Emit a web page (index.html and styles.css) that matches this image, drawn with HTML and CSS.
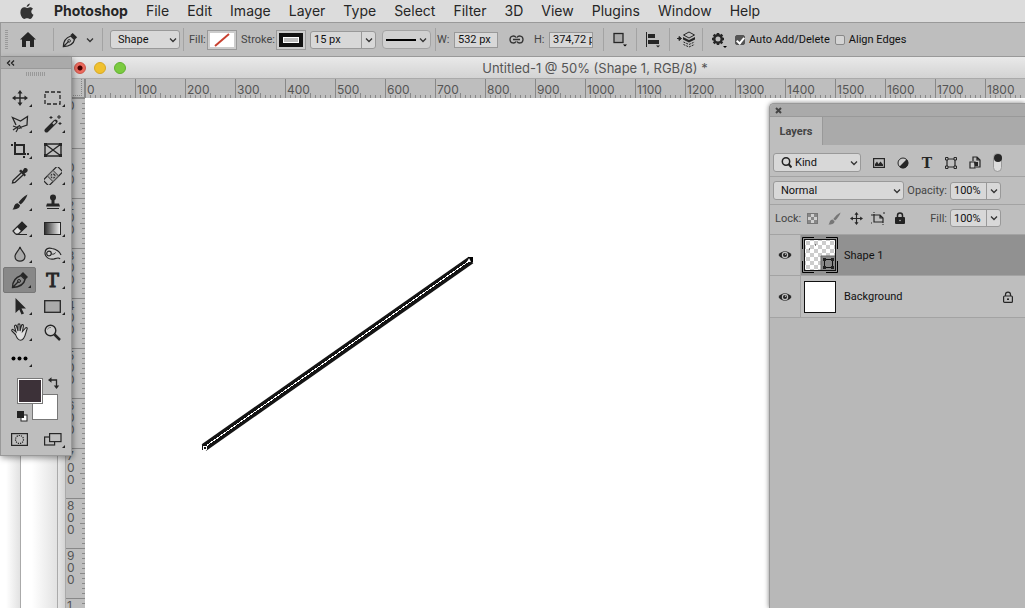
FILE: index.html
```html
<!DOCTYPE html>
<html lang="en">
<head>
  <meta charset="UTF-8" />
  <meta name="viewport" content="width=device-width, initial-scale=1.0"/>
  <title>Photoshop - Untitled-1</title>
  <link rel="stylesheet" href="styles.css">
</head>
<body>
  <!-- shared icons -->
  <svg class="defs" width="0" height="0">
    <symbol id="chevron" viewBox="0 0 8 6"><path d="M1 1.5 L4 4.5 L7 1.5" fill="none" stroke="#333" stroke-width="1.3"/></symbol>
    <symbol id="pen" viewBox="0 0 18 18">
      <path d="M1.5 16.5 C1.5 11 4 6.500 10 4.500 L14 8.500 C13 13.500 8 16 1.5 16.500Z M2 16 L7.500 10.500" fill="none" stroke="#262626" stroke-width="1.4"/>
      <circle cx="8" cy="10" r="1.500" fill="none" stroke="#262626"/>
      <path d="M9.500 3.500 L12 1 L17 6 L14.500 8.500Z" fill="#262626"/>
    </symbol>
    <symbol id="eye" viewBox="0 0 14 10">
      <path d="M0.500 5 C3.500 0 10.500 0 13.500 5 C10.500 10 3.500 10 0.500 5Z" fill="#262626"/>
      <circle cx="7" cy="5" r="3.200" fill="#bebebe"/><circle cx="7" cy="5" r="2" fill="#262626"/><circle cx="7.500" cy="4.300" r=".7" fill="#bebebe"/>
    </symbol>
    <symbol id="move" viewBox="0 0 16 16">
      <path d="M8 2V14M2 8H14" stroke="#262626" stroke-width="1.4"/>
      <path d="M8 0L10.500 3.500H5.500ZM8 16L5.500 12.500H10.500ZM0 8L3.500 5.500V10.500ZM16 8L12.500 10.500V5.500Z" fill="#262626"/>
    </symbol>
    <symbol id="brush" viewBox="0 0 16 16">
      <path d="M15.500 .5 C12 2 8.500 5.500 6.500 8.500 L8.700 10.500 C11.500 8 14.500 4 15.500 .5Z M5.800 9.300 L8 11.300 C8 14.500 4 15.500 .5 15.500 C2.500 14 1.500 9.500 5.800 9.300Z" fill="currentColor"/>
    </symbol>
    <symbol id="shape" viewBox="0 0 12 12">
      <path d="M2 2H10V10H2Z" fill="none" stroke="#262626" stroke-width="1.200"/>
      <path d="M.5 .5h2.500v2.500h-2.500zM9 .5h2.500v2.500h-2.500zM.5 9h2.500v2.500h-2.500zM9 9h2.500v2.500h-2.500z" fill="#bebebe" stroke="#262626"/>
    </symbol>
  </svg>

  <nav class="menubar">
    <a href="#" class="apple" aria-label="Apple menu"><svg width="14" height="17" viewBox="0 0 14 17"><path d="M9.800 0.500C9.900 2.300 8.300 4 6.700 3.900C6.600 2.200 8.100 .7 9.800 .5Z M7 5C7.800 5 8.600 4.200 10 4.200C11.300 4.200 12.400 4.900 13 5.800C10.500 7.300 10.900 10.600 13.500 11.700C12.700 13.900 11.400 16 9.900 16C8.800 16 8.400 15.300 7.100 15.300C5.700 15.300 5.300 16 4.300 16C2.400 16 .4 12.500 .4 9.300C.4 6 2.400 4.300 4.300 4.300C5.500 4.300 6.300 5 7 5Z" fill="#333"/></svg></a>
    <a href="#" class="app-name">Photoshop</a>
    <a href="#">File</a>
    <a href="#">Edit</a>
    <a href="#">Image</a>
    <a href="#">Layer</a>
    <a href="#">Type</a>
    <a href="#">Select</a>
    <a href="#">Filter</a>
    <a href="#">3D</a>
    <a href="#">View</a>
    <a href="#">Plugins</a>
    <a href="#">Window</a>
    <a href="#">Help</a>
  </nav>

  <div class="options">
    <span class="grip-v"></span>
    <button class="opt home" aria-label="Home"><svg width="16" height="15" viewBox="0 0 16 15"><path d="M8 0L16 7.500H14V15H10V9H6V15H2V7.500H0Z" fill="#262626"/></svg></button>
    <button class="opt pen-preset" aria-label="Pen tool preset"><svg width="16" height="16"><use href="#pen"/></svg><svg width="8" height="6"><use href="#chevron"/></svg></button>
    <div class="opt mode">
      <span class="select w70">
        <select aria-label="Tool mode"><option>Shape</option><option>Path</option></select>
        <svg width="8" height="6"><use href="#chevron"/></svg>
      </span>
    </div>
    <div class="opt paint">
      <span class="lbl">Fill:</span>
      <button class="swatch none" aria-label="Fill"><svg width="24" height="14" viewBox="0 0 24 14"><path d="M5 13L19 1" stroke="#c8402f" stroke-width="2"/></svg></button>
      <span class="lbl stroke-lbl">Stroke:</span>
      <button class="swatch black" aria-label="Stroke"><i></i></button>
      <span class="combo w65"><input type="text" value="15 px" aria-label="Stroke width"><button aria-label="Stroke width options"><svg width="8" height="6"><use href="#chevron"/></svg></button></span>
      <button class="line-style" aria-label="Stroke type"><svg width="30" height="4"><path d="M0 2H30" stroke="#000" stroke-width="2"/></svg><svg width="8" height="6"><use href="#chevron"/></svg></button>
    </div>
    <div class="opt size">
      <label for="w">W:</label><input id="w" class="field" type="text" value="532 px">
      <button class="link" aria-label="Link width and height"><svg width="15" height="9" viewBox="0 0 15 9"><path d="M7 2.500C6 .5 1 0 1 4.500S6 8.500 7 6.500M8 2.500C9 .5 14 0 14 4.500S9 8.500 8 6.500M4 4.500H11" fill="none" stroke="#333" stroke-width="1.300"/></svg></button>
      <label for="h">H:</label><input id="h" class="field" type="text" value="374,72 px">
    </div>
    <button class="opt ico" aria-label="Path operations"><svg width="15" height="15" viewBox="0 0 15 15"><rect x="1" y="1.500" width="9" height="9" fill="#aaa" stroke="#262626" stroke-width="1.300"/><path d="M10 12.500h4l-2 2z" fill="#000"/></svg></button>
    <button class="opt ico" aria-label="Path alignment"><svg width="16" height="16" viewBox="0 0 16 16"><path d="M1.500 0V15" stroke="#262626"/><path d="M3 2h7v4h-7zM3 8h11v4h-11zM11 13.500h4l-2 2z" fill="#262626"/></svg></button>
    <button class="opt ico" aria-label="Path arrangement"><svg width="19" height="17" viewBox="0 0 19 17"><path d="M0 7.500h3M2 5.500v4l2.500-2z" fill="#262626" stroke="#262626"/><path d="M12 1L17.500 4L12 7L6.500 4Z" fill="#bebebe" stroke="#262626"/><path d="M6 6l6 3 6-3v2.500l-6 3-6-3z" fill="#262626"/><path d="M6.500 11L12 13.500L17.500 11M6.500 13.500L12 16L17.500 13.500" fill="none" stroke="#262626" stroke-dasharray="2 1"/></svg></button>
    <div class="opt last">
      <button class="gear" aria-label="Settings"><svg width="16" height="16" viewBox="0 0 16 16"><path d="M7 1V13M1 7H13M2.700 2.700L11.300 11.300M11.300 2.700L2.700 11.300" stroke="#262626" stroke-width="2.500"/><circle cx="7" cy="7" r="3.700" fill="#bebebe" stroke="#262626" stroke-width="2.400"/><path d="M12 14h4l-2 2z" fill="#000"/></svg></button>
      <label class="check"><input type="checkbox" checked>Auto Add/Delete</label>
      <label class="check"><input type="checkbox">Align Edges</label>
    </div>
  </div>

  <main class="workspace">
    <div class="sheet first"></div>
    <div class="sheet second"></div>
    <div class="sheet third"></div>

    <section class="document">
      <header class="titlebar">
        <span class="lights"><i class="red"></i><i class="yellow"></i><i class="green"></i></span>
        <span class="doc-title">Untitled-1 @ 50% (Shape 1, RGB/8) *</span>
      </header>
      <div class="ruler-corner"></div>
      <div class="ruler-h">
        <span>0</span><span>100</span><span>200</span><span>300</span><span>400</span><span>500</span><span>600</span><span>700</span><span>800</span><span>900</span><span>1000</span><span>1100</span><span>1200</span><span>1300</span><span>1400</span><span>1500</span><span>1600</span><span>1700</span><span>1800</span>
      </div>
      <div class="ruler-v">
        <span>0</span><span>100</span><span>200</span><span>300</span><span>400</span><span>500</span><span>600</span><span>700</span><span>800</span><span>900</span><span>1000</span>
      </div>
      <div class="canvas">
        <svg width="400" height="360" viewBox="0 0 400 360">
          <path d="M119 349.500L386 162" stroke="#151515" stroke-width="8"/>
          <path d="M121 348L384 163" stroke="#fff" stroke-width="1" shape-rendering="crispEdges"/>
          <rect x="117" y="347" width="5" height="5" fill="#111"/>
          <rect x="118.500" y="348.500" width="3" height="3" fill="none" stroke="#fff" shape-rendering="crispEdges"/>
          <rect x="383" y="159" width="5" height="5" fill="#000"/>
          <path d="M382 164L384 160L386 164Z" fill="#fff"/>
        </svg>
      </div>
    </section>

    <aside class="tools">
      <header><svg width="9" height="6" viewBox="0 0 9 6"><path d="M4 .5L1.500 3L4 5.500M8 .5L5.500 3L8 5.500" fill="none" stroke="#222" stroke-width="1.300"/></svg></header>
      <div class="grip-h"></div>
      <div class="tool-grid">
        <button class="more" aria-label="Move"><svg width="16" height="16"><use href="#move"/></svg></button>
        <button class="more" aria-label="Marquee"><svg width="18" height="14" viewBox="0 0 18 14"><rect x="1" y="1" width="15" height="12" fill="none" stroke="#262626" stroke-width="1.300" stroke-dasharray="4 2"/></svg></button>
        <button class="more" aria-label="Lasso"><svg width="18" height="18" viewBox="0 0 18 18"><path d="M5 10L1.500 2.500L9.500 6L16.500 1.500L16 10L9 12.500" fill="none" stroke="#262626" stroke-width="1.300"/><path d="M2 11L9 13.500M2 15L8.500 10.500L10 13L5.500 13M7 13.500L5 17" fill="none" stroke="#262626" stroke-width="1.200"/></svg></button>
        <button class="more" aria-label="Magic wand"><svg width="18" height="18" viewBox="0 0 18 18"><path d="M2.500 15.500L11.500 6.500" stroke="#262626" stroke-width="4" stroke-linecap="round"/><path d="M9 9L11.500 6.500" stroke="#bebebe" stroke-width="2"/><path d="M7 1v3M5.500 2.500h3M15 0v4M13 2h4M16 7v3M14.500 8.500h3" stroke="#262626"/></svg></button>
        <button class="more" aria-label="Crop"><svg width="18" height="18" viewBox="0 0 18 18"><path d="M0 4H2M5 4H13V14M13 15V17M4 1V13H15M16 13H18" fill="none" stroke="#262626" stroke-width="2"/></svg></button>
        <button aria-label="Frame"><svg width="18" height="14" viewBox="0 0 18 14"><path d="M1 1H17V13H1ZL17 13M17 1L1 13" fill="none" stroke="#262626" stroke-width="1.400"/><path d="M0 0h3v3h-3zM15 0h3v3h-3zM0 11h3v3h-3zM15 11h3v3h-3z" fill="#262626"/></svg></button>
        <button class="more" aria-label="Eyedropper"><svg width="18" height="18" viewBox="0 0 18 18"><path d="M10 6L2 13.500L1.500 16L4 15.500L12 8" fill="none" stroke="#262626" stroke-width="1.300"/><path d="M8 4L10 2.500L11.500 4L13 1.500C15.500 0 18 3 16 5L13.500 6.500L15 8L13.500 9.500Z" fill="#262626"/></svg></button>
        <button class="more" aria-label="Healing brush"><svg width="18" height="18" viewBox="0 0 18 18"><g transform="rotate(-45 9 9)" fill="none" stroke="#262626"><rect x="-1" y="5" width="20" height="8" rx="1" stroke-width="1.200"/><rect x="5" y="5" width="8" height="8" fill="#aaa" stroke="#555"/><circle cx="9" cy="9" r="2" stroke-dasharray="1.500 1"/></g></svg></button>
        <button class="more" aria-label="Brush"><svg width="16" height="16"><use href="#brush"/></svg></button>
        <button class="more" aria-label="Clone stamp"><svg width="16" height="16" viewBox="0 0 16 16"><circle cx="8" cy="3.500" r="3" fill="#262626"/><path d="M6.500 5h3v4.500h4.500l1 3H1l1-3h4.500z" fill="#262626"/><path d="M2 14.500H14" stroke="#262626"/></svg></button>
        <button class="more" aria-label="Eraser"><svg width="18" height="16" viewBox="0 0 18 16"><path d="M2 11L11 2L15.500 6.500L7.500 14H4.500Z" fill="#ddd" stroke="#262626" stroke-width="1.200"/><path d="M6 7L11 2L15.500 6.500L10.500 11.500Z" fill="#262626"/><path d="M5 14.500H16" stroke="#262626"/></svg></button>
        <button class="more" aria-label="Gradient"><span class="gradient-ico"></span></button>
        <button class="more" aria-label="Blur"><svg width="14" height="16" viewBox="0 0 14 16"><path d="M7 .8C8 5 12 7 12 10.500C12 13.500 9.500 15.200 7 15.200S2 13.500 2 10.500C2 7 6 5 7 .8Z" fill="#aaa" stroke="#262626" stroke-width="1.200"/></svg></button>
        <button class="more" aria-label="Dodge"><svg width="18" height="16" viewBox="0 0 18 16"><path d="M16 13C15 11 13 12 10 13C5 14 1 11 1 7C1 3 4 1.500 8 2.500C12 3 16 6 17 9" fill="#ccc" stroke="#262626" stroke-width="1.200"/><circle cx="5" cy="7.500" r="2.300" fill="none" stroke="#262626" stroke-width="1.200"/><path d="M7.500 8C9 8.500 11 8 11.500 6.500" fill="none" stroke="#262626"/></svg></button>
        <button class="more active" aria-label="Pen"><svg width="18" height="18"><use href="#pen"/></svg></button>
        <button class="more type-ico" aria-label="Type">T</button>
        <button class="more" aria-label="Path selection"><svg width="12" height="18" viewBox="0 0 12 18"><path d="M1.500 1L12 11.500H7.500L10 16.500L7.500 17.500L5.300 12.500L1.500 16Z" fill="#262626"/></svg></button>
        <button class="more" aria-label="Rectangle"><svg width="17" height="13" viewBox="0 0 17 13"><rect x=".7" y=".7" width="15.600" height="11.600" fill="#aaa" stroke="#262626" stroke-width="1.300"/></svg></button>
        <button class="more" aria-label="Hand"><svg width="20" height="18" viewBox="0 0 20 18"><path d="M5.500 11.500L2 8C1 7 2.500 5.800 3.500 6.800L6 9L4.500 3.500C4.200 2 6 1.700 6.500 3L8 8V2C8 .5 10 .5 10 2V8L11.500 2.500C12 1 13.700 1.500 13.400 3L12.500 8.500L15.500 5C16.500 4 17.800 5 17 6.200C15.500 9 15.500 17.200 10.500 17.200C7.500 17.200 6.500 14 5.500 11.500Z" fill="#ddd" stroke="#262626" stroke-width="1.100"/></svg></button>
        <button aria-label="Zoom"><svg width="17" height="17" viewBox="0 0 17 17"><circle cx="6.500" cy="6.500" r="5.300" fill="#ccc" stroke="#262626" stroke-width="1.400"/><path d="M3.500 5.500C4 4 5.500 3.300 7 3.500" fill="none" stroke="#777"/><path d="M10.500 10.500L16 16" stroke="#262626" stroke-width="2.500"/></svg></button>
        <button class="more" aria-label="Edit toolbar"><svg width="17" height="5" viewBox="0 0 17 5"><circle cx="2.500" cy="2.500" r="2"/><circle cx="8.500" cy="2.500" r="2"/><circle cx="14.500" cy="2.500" r="2"/></svg></button>
      </div>
      <div class="colors">
        <button class="bg-color" aria-label="Background color"></button>
        <button class="fg-color" aria-label="Foreground color"></button>
        <button class="swap" aria-label="Swap colors"><svg width="12" height="12" viewBox="0 0 12 12"><path d="M2 3H8.500V9" fill="none" stroke="#262626" stroke-width="1.300"/><path d="M0 3L3.500 .3V5.700ZM8.500 12L5.800 8.500H11.200Z" fill="#262626"/></svg></button>
        <button class="default" aria-label="Default colors"><svg width="11" height="11" viewBox="0 0 11 11"><rect x="4" y="4" width="6" height="6" fill="#fff" stroke="#262626"/><rect width="7" height="7" fill="#222"/></svg></button>
      </div>
      <div class="tool-grid modes">
        <button aria-label="Quick mask"><svg width="17" height="13" viewBox="0 0 17 13"><rect x=".6" y=".6" width="15.800" height="11.800" fill="none" stroke="#262626" stroke-width="1.200"/><circle cx="8.500" cy="6.500" r="4" fill="none" stroke="#262626" stroke-width="1.200" stroke-dasharray="1.200 1"/></svg></button>
        <button class="more" aria-label="Screen mode"><svg width="18" height="13" viewBox="0 0 18 13"><rect x=".6" y="4" width="10" height="8" fill="none" stroke="#262626" stroke-width="1.200"/><rect x="5.600" y=".6" width="11.400" height="8" fill="#bebebe" stroke="#262626" stroke-width="1.200"/></svg></button>
      </div>
    </aside>

    <aside class="layers">
      <header><svg width="7" height="7" viewBox="0 0 7 7"><path d="M1 1L6 6M6 1L1 6" stroke="#444" stroke-width="2"/></svg></header>
      <div class="tabs"><button>Layers</button></div>

      <div class="panel-row filter">
        <span class="select w88 search">
          <svg class="lens" width="11" height="11" viewBox="0 0 11 11"><circle cx="5" cy="4.500" r="3.700" fill="none" stroke="#222" stroke-width="1.500"/><path d="M7.500 7L10.500 10.500" stroke="#222" stroke-width="2"/></svg>
          <select aria-label="Filter kind"><option>Kind</option></select>
          <svg width="8" height="6"><use href="#chevron"/></svg>
        </span>
        <div class="filter-icons">
          <button aria-label="Pixel layers"><svg width="12" height="10" viewBox="0 0 12 10"><rect x=".6" y=".6" width="10.800" height="8.800" fill="none" stroke="#262626" stroke-width="1.200"/><path d="M2 8V6L4 3.500L5.500 6L7.500 3.500L10 6.500V8Z" fill="#262626"/></svg></button>
          <button aria-label="Adjustment layers"><svg width="12" height="12" viewBox="0 0 12 12"><circle cx="6" cy="6" r="5" fill="#ccc" stroke="#262626"/><path d="M9.700 2.300A5.200 5.200 0 1 1 2.300 9.700Z" fill="#262626"/></svg></button>
          <button class="t" aria-label="Type layers">T</button>
          <button aria-label="Shape layers"><svg width="12" height="12"><use href="#shape"/></svg></button>
          <button aria-label="Smart objects"><svg width="12" height="13" viewBox="0 0 12 13"><path d="M4 5V1H8L11 4V11H7M8 1V4H11" fill="none" stroke="#262626" stroke-width="1.200"/><path d="M1 6H6V12H1Z" fill="#ccc" stroke="#262626" stroke-width="1.200"/><path d="M5 6h4v4h-3z" fill="#262626"/></svg></button>
          <button class="toggle" aria-label="Toggle filter"><i></i></button>
        </div>
      </div>

      <div class="panel-row blend">
        <span class="select w131">
          <select aria-label="Blend mode"><option>Normal</option><option>Multiply</option></select>
          <svg width="8" height="6"><use href="#chevron"/></svg>
        </span>
        <label class="amount" for="opacity">Opacity:</label>
        <span class="combo w51"><input id="opacity" type="text" value="100%"><button aria-label="Opacity slider"><svg width="8" height="6"><use href="#chevron"/></svg></button></span>
      </div>

      <div class="panel-row lock">
        <span class="lock-lbl">Lock:</span>
        <div class="lock-icons">
          <button aria-label="Lock transparency"><svg width="11" height="11" viewBox="0 0 11 11"><rect x=".5" y=".5" width="10" height="10" fill="#d0d0d0" stroke="#777"/><path d="M1 1h3v3h-3zM7 1h3v3h-3zM4 4h3v3h-3zM1 7h3v3h-3zM7 7h3v3h-3z" fill="#888"/></svg></button>
          <button class="dim" aria-label="Lock pixels"><svg width="13" height="13"><use href="#brush"/></svg></button>
          <button aria-label="Lock position"><svg width="13" height="13"><use href="#move"/></svg></button>
          <button aria-label="Lock artboard"><svg width="14" height="13" viewBox="0 0 14 13"><path d="M0 3H9L12 6V11M3 2V10H12M9 3V6H12" fill="none" stroke="#262626" stroke-width="1.200"/><path d="M3 0v1M12 1h2M0 11h1M12 12v1" stroke="#262626"/></svg></button>
          <button aria-label="Lock all"><svg width="10" height="12" viewBox="0 0 10 12"><path d="M2.500 6V3.500C2.500 .3 7.500 .3 7.500 3.500V6" fill="none" stroke="#222" stroke-width="1.500"/><rect y="5" width="10" height="7" rx="1" fill="#222"/><circle cx="5" cy="8.500" r=".8" fill="#bbb"/></svg></button>
        </div>
        <label class="amount" for="fill">Fill:</label>
        <span class="combo w51"><input id="fill" type="text" value="100%"><button aria-label="Fill slider"><svg width="8" height="6"><use href="#chevron"/></svg></button></span>
      </div>

      <div class="layer selected">
        <button class="eye" aria-label="Toggle visibility"><svg width="14" height="10"><use href="#eye"/></svg></button>
        <svg class="thumb" width="36" height="36" viewBox="0 0 36 36">
          <defs><pattern id="checker" width="8" height="8" patternUnits="userSpaceOnUse"><rect width="8" height="8" fill="#fff"/><path d="M0 0h4v4h-4zM4 4h4v4h-4z" fill="#ccc"/></pattern></defs>
          <rect x="2.500" y="2.500" width="31" height="31" fill="url(#checker)" stroke="#111"/>
          <path d="M7 12h1M13 8h1" stroke="#111"/>
          <rect x="19" y="19" width="14" height="14" fill="#888"/>
          <path d="M19 33V19H33" fill="none" stroke="#666"/>
          <path d="M22.500 22.500h8v8h-8z" fill="none" stroke="#111"/>
          <path d="M21 21h3v3h-3zM29 21h3v3h-3zM21 29h3v3h-3zM29 29h3v3h-3z" fill="#222"/>
          <path d="M.5 12V.5H12M24 .5H35.500V12M35.500 24V35.500H24M12 35.500H.5V24" fill="none" stroke="#000"/>
        </svg>
        <span class="name">Shape 1</span>
      </div>
      <div class="layer">
        <button class="eye" aria-label="Toggle visibility"><svg width="14" height="10"><use href="#eye"/></svg></button>
        <svg class="thumb" width="36" height="36" viewBox="0 0 36 36"><rect x="2.500" y="2.500" width="31" height="31" fill="#fff" stroke="#111"/></svg>
        <span class="name">Background</span>
        <svg class="locked" width="10" height="12" viewBox="0 0 10 12"><path d="M2.500 5V3.500C2.500 .3 7.500 .3 7.500 3.500V5" fill="none" stroke="#262626" stroke-width="1.200"/><rect x=".6" y="5" width="8.800" height="6.400" rx="1" fill="none" stroke="#262626" stroke-width="1.200"/><circle cx="5" cy="8.200" r=".9"/></svg>
      </div>
    </aside>
  </main>
</body>
</html>
```
FILE: styles.css
```css
* {
  box-sizing: border-box;
}

body {
  margin: 0;
  height: 100vh;
  display: flex;
  flex-direction: column;
  overflow: hidden;
  font-family: Roboto, "Liberation Sans", sans-serif;
  font-size: 11px;
  color: #111;
}

button {
  display: flex;
  align-items: center;
  justify-content: center;
  padding: 0;
  border: none;
  background: none;
  font: inherit;
  color: #262626;
}

input,
select {
  font: inherit;
  color: #111;
}

svg {
  flex: none;
}

.defs {
  position: absolute;
}

/* menu bar */
.menubar {
  flex: none;
  display: flex;
  align-items: center;
  gap: 18px;
  height: 23px;
  padding-left: 20px;
  background: #dcdcdc;
  border-bottom: 1px solid #999;
  font-family: Inter, "Liberation Sans", sans-serif;
  font-size: 14px;
  line-height: 22px;
}

.menubar a {
  color: #262626;
  text-decoration: none;
  white-space: nowrap;
}

.apple {
  display: flex;
  width: 16px;
}

.menubar .app-name {
  font-weight: 700;
}

/* options bar */
.options {
  flex: none;
  display: flex;
  align-items: center;
  height: 34px;
  background: #bebebe;
  border-left: 1px solid #999;
  border-bottom: 1px solid #999;
  white-space: nowrap;
}

.grip-v {
  width: 3px;
  height: 20px;
  margin-left: 4px;
  background: repeating-linear-gradient(#999 0 1px, transparent 1px 2px);
}

.opt {
  display: flex;
  align-items: center;
  height: 23px;
  border-right: 1px solid #a3a3a3;
}

.home {
  width: 46px;
  justify-content: flex-start;
  padding-left: 12px;
}

.pen-preset {
  width: 49px;
  gap: 8px;
}

.mode {
  width: 81px;
  padding-left: 7px;
}

.paint {
  width: 252px;
  padding-left: 5px;
}

.size {
  width: 168px;
  padding-left: 1px;
}

.ico {
  width: 33px;
}

.last {
  border: none;
  padding-left: 8px;
}

.lbl,
.options label,
.amount,
.lock-lbl {
  color: #444;
}

.lbl {
  width: 18px;
}

.stroke-lbl {
  width: 35px;
  margin-left: 4px;
}

.select {
  position: relative;
  display: flex;
  height: 19px;
}

.select select {
  appearance: none;
  width: 100%;
  padding: 0 7px;
  background: #d8d8d8;
  border: 1px solid #999;
  border-radius: 3px;
}

.select svg {
  position: absolute;
  right: 3px;
  top: 7px;
  pointer-events: none;
}

.select .lens {
  left: 8px;
  top: 4px;
}

.search select {
  padding-left: 21px;
}

.w51 {
  width: 51px;
}

.w65 {
  width: 66px;
}

.w70 {
  width: 70px;
}

.w88 {
  width: 88px;
}

.w131 {
  width: 131px;
}

.swatch {
  width: 30px;
  height: 20px;
  border: 1px solid #999;
  background: #ccc;
}

.swatch.none svg {
  background: #fff;
}

.swatch.black {
  margin-right: 4px;
}

.swatch i {
  width: 16px;
  height: 6px;
  background: #bebebe;
  border: 1px solid #fff;
  box-shadow: 0 0 0 4px #111;
}

.combo {
  display: flex;
  height: 18px;
  background: #d8d8d8;
  border: 1px solid #999;
  border-radius: 3px;
}

.combo input {
  flex: 1;
  min-width: 0;
  padding: 0 3px;
  border: none;
  background: none;
}

.combo button {
  width: 14px;
  border-left: 1px solid #999;
}

.line-style {
  width: 49px;
  height: 19px;
  margin-left: 6px;
  gap: 3px;
  background: #d0d0d0;
  border: 1px solid #a3a3a3;
  border-radius: 4px;
}

.size label {
  width: 17px;
}

.size .field {
  width: 44px;
  height: 16px;
  padding: 0 0 0 3px;
  background: #d8d8d8;
  border: 1px solid #999;
}

.link {
  width: 36px;
}

.size .link + label {
  width: 15px;
}

.gear {
  margin-right: 8px;
}

.options .check {
  display: flex;
  align-items: center;
  gap: 4px;
  margin-right: 5px;
  color: #111;
}

.check input {
  appearance: none;
  width: 10px;
  height: 10px;
  margin: 0;
  border: 1px solid #888;
  border-radius: 2px;
  background: #d4d4d4;
}

.check input:checked {
  display: grid;
  place-items: center;
  background: #555;
  border-color: #555;
}

.check input:checked::after {
  content: "";
  width: 3px;
  height: 6px;
  border: solid #fff;
  border-width: 0 2px 2px 0;
  transform: rotate(40deg);
}

/* workspace */
.workspace {
  position: relative;
  flex: 1;
  min-height: 0;
  display: flex;
}

.sheet {
  flex: none;
  background: linear-gradient(90deg, #fff 30%, #e2e2e2);
  border-right: 1px solid #aaa;
}

.first {
  width: 21px;
}

.second {
  width: 37px;
}

.third {
  width: 8px;
  background: linear-gradient(90deg, #e6e6e6, #d4d4d4);
}

.document {
  flex: 1;
  min-width: 0;
  display: grid;
  grid-template: 22px 19px 1fr / 19px 1fr;
  background: #fff;
  font-family: Inter, "Liberation Sans", sans-serif;
}

.titlebar {
  grid-column: 1 / -1;
  display: flex;
  align-items: center;
  padding-top: 1px;
  background: linear-gradient(#e9e9e9, #d3d3d3);
  border-bottom: 1px solid #aaa;
  font-size: 13px;
  color: #555;
}

.lights {
  display: flex;
  gap: 8px;
  width: 62px;
  padding-left: 8px;
}

.lights i {
  width: 12px;
  height: 12px;
  border-radius: 50%;
}

.lights .red {
  background: radial-gradient(#400 2px, #ed6a5e 3px);
  border: 1px solid #cc5448;
}

.lights .yellow {
  background: #f0c12f;
  border: 1px solid #d6a826;
}

.lights .green {
  background: #7bcb40;
  border: 1px solid #62b02f;
}

.doc-title {
  flex: 1;
  padding-left: 37px;
  text-align: center;
}

.ruler-corner {
  background: #bebebe;
  border-right: 1px solid #888;
  border-bottom: 1px solid #888;
}

.ruler-corner::before {
  content: "";
  display: block;
  width: 15px;
  height: 16px;
  border: dotted #888;
  border-width: 0 1px 1px 0;
}

.ruler-h,
.ruler-v {
  display: flex;
  min-width: 0;
  min-height: 0;
  overflow: hidden;
  background: #bebebe;
  color: #555;
  font-size: 12px;
}

.ruler-h span {
  flex: none;
  width: 50px;
  padding: 3px 0 0 1px;
  line-height: 15px;
  border-left: 1px solid #888;
  background:
    repeating-linear-gradient(90deg, transparent 0 4px, #888 4px 5px) bottom / 100% 3px no-repeat,
    linear-gradient(#888, #888) 24px 100% / 1px 5px no-repeat;
}

.ruler-v {
  flex-direction: column;
}

.ruler-v span {
  flex: none;
  height: 50px;
  padding: 1px 10px 0 1px;
  line-height: 12px;
  word-break: break-all;
  border-top: 1px solid #888;
  background:
    repeating-linear-gradient(transparent 0 4px, #888 4px 5px) right / 3px 100% no-repeat,
    linear-gradient(#888, #888) 100% 24px / 5px 1px no-repeat;
}

.canvas {
  min-width: 0;
  overflow: hidden;
}

/* tools panel */
.tools {
  position: absolute;
  left: 0;
  top: 0;
  width: 72px;
  background: #bebebe;
  border: solid #999;
  border-width: 0 1px 1px;
  box-shadow: 1px 2px 6px rgba(0, 0, 0, 0.4);
}

.tools header {
  display: flex;
  align-items: center;
  height: 12px;
  padding-left: 5px;
  background: #aaa;
  border-bottom: 1px solid #999;
}

.grip-h {
  width: 19px;
  height: 4px;
  margin: 3px 0 9px 25px;
  background: repeating-linear-gradient(90deg, #999 0 1px, transparent 1px 2px);
}

.tool-grid {
  display: grid;
  grid-template-columns: 33px 33px;
  grid-auto-rows: 26px;
  padding-left: 2px;
}

.tool-grid button {
  position: relative;
  border-radius: 2px;
}

.more::after {
  content: "";
  position: absolute;
  right: 4px;
  bottom: 4px;
  border: solid transparent;
  border-width: 0 0 3px 3px;
  border-bottom-color: #222;
}

.tool-grid .active {
  background: #888;
  border: 1px solid #777;
}

.tool-grid .type-ico {
  font: 19px "DejaVu Serif", serif;
  -webkit-text-stroke: 1px #262626;
}

.gradient-ico {
  width: 17px;
  height: 13px;
  border: 1px solid #262626;
  background: linear-gradient(90deg, #333, #eee);
}

.colors {
  position: relative;
  height: 55px;
}

.colors button {
  position: absolute;
}

.fg-color,
.bg-color {
  width: 26px;
  height: 26px;
  border: 1px solid #777;
}

.colors .fg-color {
  left: 16px;
  top: 7px;
  background: #3c3138;
  box-shadow: inset 0 0 0 1px #fff;
}

.colors .bg-color {
  left: 31px;
  top: 23px;
  background: #fff;
}

.colors .swap {
  left: 47px;
  top: 6px;
}

.colors .default {
  left: 16px;
  top: 40px;
}

.modes {
  padding-bottom: 3px;
}

/* layers panel */
.layers {
  position: absolute;
  right: 0;
  top: 46px;
  bottom: 0;
  width: 256px;
  background: #b8b8b8;
  border: solid #999;
  border-width: 1px 0 0 1px;
  border-top-left-radius: 5px;
  box-shadow: 0 0 5px rgba(0, 0, 0, 0.5);
}

.layers header {
  display: flex;
  align-items: center;
  height: 13px;
  padding-left: 5px;
  background: #aaa;
  border-bottom: 1px solid #999;
  border-top-left-radius: 5px;
}

.tabs {
  height: 28px;
  background: #aaa;
}

.tabs button {
  width: 53px;
  height: 28px;
  background: #bebebe;
  border-right: 1px solid #999;
  font-weight: 700;
  color: #444;
}

.panel-row {
  display: flex;
  align-items: center;
  height: 28px;
  padding-left: 3px;
  background: #bebebe;
  border-bottom: 1px solid #a3a3a3;
}

.panel-row.filter {
  height: 32px;
  padding-top: 4px;
}

.panel-row.lock {
  height: 30px;
  padding-bottom: 3px;
}

.filter-icons {
  display: flex;
  align-items: center;
  padding-left: 6px;
}

.filter-icons button {
  width: 24px;
  height: 20px;
}

.filter-icons .t {
  font: bold 14px "DejaVu Serif", serif;
}

.filter-icons .toggle {
  width: 9px;
  height: 19px;
  margin-left: 6px;
  align-items: flex-start;
  background: #ddd;
  border: 1px solid #999;
  border-radius: 5px;
}

.toggle i {
  flex: none;
  width: 8px;
  height: 8px;
  border-radius: 50%;
  background: #262626;
}

.amount {
  flex: 1;
  padding-right: 3px;
  text-align: right;
}

.panel-row .combo {
  margin-right: 24px;
}

.lock-lbl {
  width: 28px;
  padding-left: 2px;
}

.lock-icons {
  display: flex;
  width: 110px;
}

.lock-icons button {
  width: 22px;
}

.lock-icons .dim {
  color: #777;
}

.layer {
  display: flex;
  align-items: center;
  height: 42px;
  background: #bebebe;
  border-bottom: 1px solid #a3a3a3;
}

.layer.selected {
  height: 41px;
  background: linear-gradient(90deg, #bebebe 30px, #919191 30px);
}

.eye {
  width: 31px;
  height: 100%;
  border-right: 1px solid #a3a3a3;
}

.thumb {
  margin: 0 6px 0 1px;
}

.name {
  flex: 1;
}

.locked {
  margin-right: 12px;
}
```
